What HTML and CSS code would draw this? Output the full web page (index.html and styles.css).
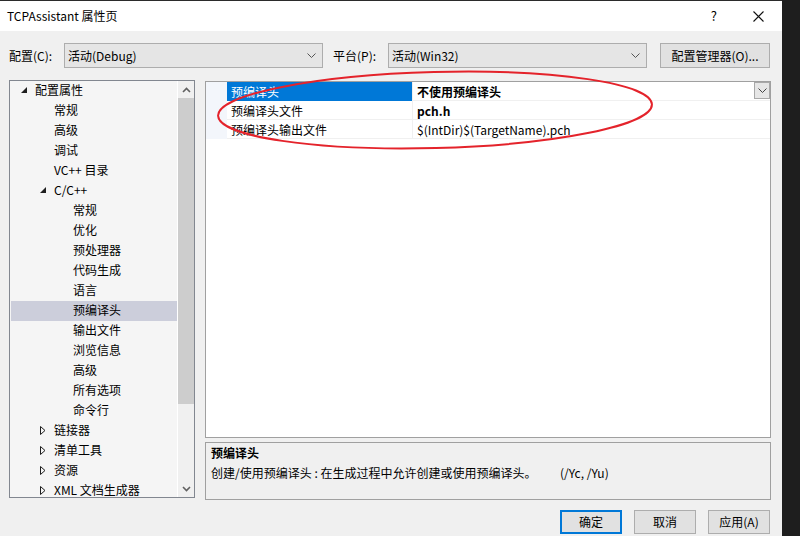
FILE: index.html
```html
<!DOCTYPE html>
<html lang="zh-CN">
<head>
<meta charset="utf-8">
<title>TCPAssistant 属性页</title>
<link rel="stylesheet" href="styles.css">
</head>
<body>
<div class="dialog">
  <div class="titlebar">
    <span class="title">TCPAssistant 属性页</span>
    <span class="help">?</span>
    <svg class="close" width="11" height="11" viewBox="0 0 11 11"><path d="M0.5 0.5L10.5 10.5M10.5 0.5L0.5 10.5" stroke="#111" stroke-width="1.1" fill="none"/></svg>
  </div>

  <div class="toolbar">
    <span class="label">配置(C):</span>
    <div class="select">
      <span>活动(Debug)</span>
      <svg class="chev" width="9" height="5" viewBox="0 0 9 5"><path d="M0.5 0.5L4.5 4.5L8.5 0.5" stroke="#555" fill="none"/></svg>
    </div>
    <span class="label label-gap">平台(P):</span>
    <div class="select">
      <span>活动(Win32)</span>
      <svg class="chev" width="9" height="5" viewBox="0 0 9 5"><path d="M0.5 0.5L4.5 4.5L8.5 0.5" stroke="#555" fill="none"/></svg>
    </div>
    <button class="btn btn-manager">配置管理器(O)...</button>
  </div>

  <div class="main">
    <div class="tree">
      <ul class="tree-list">
        <li class="lvl0"><svg class="tri-open" width="6" height="6" viewBox="0 0 6 6"><polygon points="6,0 6,6 0,6" fill="#1e1e1e"/></svg>配置属性</li>
        <li class="lvl1">常规</li>
        <li class="lvl1">高级</li>
        <li class="lvl1">调试</li>
        <li class="lvl1">VC++ 目录</li>
        <li class="lvl1 has-tri"><svg class="tri-open" width="6" height="6" viewBox="0 0 6 6"><polygon points="6,0 6,6 0,6" fill="#1e1e1e"/></svg>C/C++</li>
        <li class="lvl2">常规</li>
        <li class="lvl2">优化</li>
        <li class="lvl2">预处理器</li>
        <li class="lvl2">代码生成</li>
        <li class="lvl2">语言</li>
        <li class="lvl2 selected">预编译头</li>
        <li class="lvl2">输出文件</li>
        <li class="lvl2">浏览信息</li>
        <li class="lvl2">高级</li>
        <li class="lvl2">所有选项</li>
        <li class="lvl2">命令行</li>
        <li class="lvl1 has-tri"><svg class="tri-closed" width="6" height="9" viewBox="0 0 6 9"><polygon points="0.5,0.5 5,4.5 0.5,8.5" fill="none" stroke="#1e1e1e"/></svg>链接器</li>
        <li class="lvl1 has-tri"><svg class="tri-closed" width="6" height="9" viewBox="0 0 6 9"><polygon points="0.5,0.5 5,4.5 0.5,8.5" fill="none" stroke="#1e1e1e"/></svg>清单工具</li>
        <li class="lvl1 has-tri"><svg class="tri-closed" width="6" height="9" viewBox="0 0 6 9"><polygon points="0.5,0.5 5,4.5 0.5,8.5" fill="none" stroke="#1e1e1e"/></svg>资源</li>
        <li class="lvl1 has-tri"><svg class="tri-closed" width="6" height="9" viewBox="0 0 6 9"><polygon points="0.5,0.5 5,4.5 0.5,8.5" fill="none" stroke="#1e1e1e"/></svg>XML 文档生成器</li>
      </ul>
      <div class="scrollbar">
        <div class="sb-arrow"><svg width="9" height="6" viewBox="0 0 9 6"><path d="M1 5L4.5 1.5L8 5" stroke="#606060" stroke-width="1.6" fill="none"/></svg></div>
        <div class="sb-track"><div class="sb-thumb"></div></div>
        <div class="sb-arrow"><svg width="9" height="6" viewBox="0 0 9 6"><path d="M1 1L4.5 4.5L8 1" stroke="#606060" stroke-width="1.6" fill="none"/></svg></div>
      </div>
    </div>

    <div class="right">
      <div class="grid">
        <div class="row">
          <div class="gutter"></div>
          <div class="name active">预编译头</div>
          <div class="value bold">不使用预编译头
            <span class="drop"><svg width="9" height="5" viewBox="0 0 9 5"><path d="M0.5 0.5L4.5 4.5L8.5 0.5" stroke="#444" fill="none"/></svg></span>
          </div>
        </div>
        <div class="row">
          <div class="gutter"></div>
          <div class="name">预编译头文件</div>
          <div class="value bold">pch.h</div>
        </div>
        <div class="row">
          <div class="gutter"></div>
          <div class="name">预编译头输出文件</div>
          <div class="value">$(IntDir)$(TargetName).pch</div>
        </div>
      </div>
      <div class="desc">
        <div class="desc-title">预编译头</div>
        <div class="desc-text"><span class="desc-main">创建/使用预编译头 : 在生成过程中允许创建或使用预编译头。</span><span>(/Yc, /Yu)</span></div>
      </div>
    </div>
  </div>

  <div class="actions">
    <button class="btn btn-default">确定</button>
    <button class="btn">取消</button>
    <button class="btn">应用(A)</button>
  </div>

  <svg class="mark" width="782" height="536" viewBox="0 0 782 536">
    <ellipse cx="435" cy="110" rx="217" ry="38" transform="rotate(-1.5 435 110)" fill="none" stroke="#e4232b" stroke-width="2"/>
  </svg>
</div>
</body>
</html>
```

FILE: styles.css
```css
html, body {
  margin: 0;
  padding: 0;
}

body {
  background: #1e1e1e;
  font-family: "Noto Sans CJK SC", "Noto Sans", sans-serif;
  font-size: 12px;
  color: #000;
}

.dialog {
  position: relative;
  width: 782px;
  height: 536px;
  box-sizing: border-box;
  border-top: 1px solid #2b2b2b;
  background: #f0f0f0;
  overflow: hidden;
}

/* title bar */
.titlebar {
  height: 30px;
  background: #fff;
  display: flex;
  align-items: center;
  padding-left: 7px;
}

.title {
  line-height: 16px;
}

.help {
  margin-left: auto;
  font-size: 13px;
  line-height: 16px;
  margin-right: 36px;
}

.close {
  margin-right: 18px;
}

/* configuration / platform row */
.toolbar {
  display: flex;
  align-items: center;
  height: 25px;
  margin-top: 12px;
  padding-left: 9px;
}

.label {
  width: 55px;
  line-height: 16px;
}

.label-gap {
  margin-left: 10px;
}

.select {
  width: 259px;
  height: 25px;
  box-sizing: border-box;
  border: 1px solid #adadad;
  background: #e5e5e5;
  display: flex;
  align-items: center;
  padding-left: 3px;
}

.select .chev {
  margin-left: auto;
  margin-right: 6px;
}

.btn {
  font-family: inherit;
  font-size: 12px;
  color: #000;
  background: #e1e1e1;
  border: 1px solid #adadad;
  height: 24px;
  padding: 0;
  line-height: 16px;
}

.btn-manager {
  margin-left: 13px;
  width: 110px;
  height: 25px;
}

/* main area */
.main {
  display: flex;
  align-items: flex-start;
  margin-top: 12px;
  padding-left: 9px;
  gap: 10px;
}

.tree {
  width: 186px;
  height: 418px;
  box-sizing: border-box;
  border: 1px solid #828790;
  background: #f5f5f5;
  display: flex;
}

.tree-list {
  list-style: none;
  margin: 0;
  padding: 0 0 0 1px;
  width: 166px;
  height: 416px;
  overflow: hidden;
  border-right: 1px solid #fff;
}

.tree-list li {
  height: 20px;
  box-sizing: border-box;
  padding-bottom: 2px;
  line-height: 18px;
  display: flex;
  align-items: center;
  white-space: nowrap;
}

.tree-list .lvl0 { padding-left: 10px; }
.tree-list .lvl0 .tri-open { margin-right: 8px; }
.tree-list .lvl1 { padding-left: 43px; }
.tree-list .lvl1.has-tri { padding-left: 29px; }
.tree-list .lvl1 .tri-open { margin-right: 8px; }
.tree-list .lvl1 .tri-closed { margin-right: 8px; }
.tree-list .lvl2 { padding-left: 62px; }

.tree-list .selected {
  background: #cccedb;
}

.scrollbar {
  width: 16px;
  background: #f0f0f0;
  display: flex;
  flex-direction: column;
}

.sb-arrow {
  height: 17px;
  display: flex;
  align-items: center;
  justify-content: center;
}

.sb-track {
  flex: 1;
  position: relative;
}

.sb-thumb {
  height: 306px;
  background: #cdcdcd;
}

/* property grid */
.right {
  width: 566px;
  margin-top: 1px;
  display: flex;
  flex-direction: column;
  gap: 4px;
}

.grid {
  height: 357px;
  box-sizing: border-box;
  border: 1px solid #a0a0a0;
  background: #fff;
}

.row {
  display: grid;
  grid-template-columns: 21px 186px 1fr;
  height: 19px;
  box-sizing: border-box;
  border-bottom: 1px solid #f0f0f0;
}

.gutter {
  background: #f3f6fb;
}

.name {
  padding-left: 4px;
  line-height: 19px;
  border-right: 1px solid #f0f0f0;
  white-space: nowrap;
}

.name.active {
  background: #0078d7;
  color: #fff;
}

.value {
  padding-left: 4px;
  line-height: 19px;
  position: relative;
  white-space: nowrap;
}

.bold {
  font-weight: bold;
}

.drop {
  position: absolute;
  right: 0;
  top: 0;
  width: 16px;
  height: 17px;
  box-sizing: border-box;
  border: 1px solid #a8a8a8;
  background: #e6e6e6;
  display: flex;
  align-items: center;
  justify-content: center;
}

/* description */
.desc {
  height: 58px;
  box-sizing: border-box;
  border: 1px solid #a0a0a0;
  background: #f0f0f0;
  padding-left: 5px;
}

.desc-title {
  font-weight: bold;
  line-height: 20px;
}

.desc-text {
  line-height: 20px;
  white-space: nowrap;
}

.desc-main {
  display: inline-block;
  width: 349px;
}

/* dialog buttons */
.actions {
  display: flex;
  justify-content: flex-end;
  gap: 12px;
  margin-top: 10px;
  padding-right: 12px;
}

.actions .btn {
  width: 62px;
}

.btn-default {
  border: 2px solid #0078d7;
  width: 61px;
}

.mark {
  position: absolute;
  left: 0;
  top: -1px;
  pointer-events: none;
}
```
